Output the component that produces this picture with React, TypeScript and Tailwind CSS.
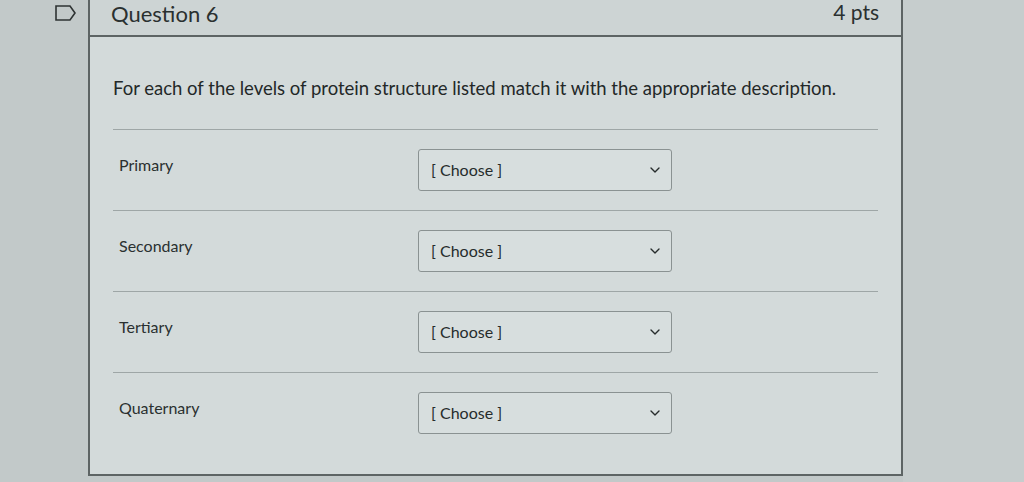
import { ChevronDown } from 'lucide-react';

const rows = ['Primary', 'Secondary', 'Tertiary', 'Quaternary'];

function ChooseSelect() {
  return (
    <div className="w-[254px] h-[42px] rounded-[3px] border border-[#8a9292] bg-[#d7dede] flex items-center justify-between pl-3 pr-2">
      <span className="text-[16px] text-[#262c2c]">[ Choose ]</span>
      <ChevronDown className="w-4 h-4 text-[#262c2c]" strokeWidth={2} />
    </div>
  );
}

export default function App() {
  return (
    <div
      className="w-[1024px] h-[482px] overflow-hidden bg-[#c2c9c9] flex"
      style={{ fontFamily: 'Lato, "Noto Sans", sans-serif' }}
    >
      <div className="w-[88px] shrink-0 flex justify-end pr-[11px] pt-[5px]">
        <svg width="22" height="16" viewBox="0 0 22 16" fill="none">
          <path d="M1 1 H15 L20 8 L15 15 H1 Z" stroke="#2e3333" strokeWidth="1.6" strokeLinejoin="miter" />
        </svg>
      </div>
      <div className="w-[815px] h-[476px] shrink-0 border-l-2 border-r-2 border-b-2 border-[#5d6464] bg-[#d3dada] flex flex-col">
        <div className="h-[37px] shrink-0 bg-[#cdd4d4] border-b-2 border-[#5d6464] flex justify-between pl-[21px] pr-[22px]">
          <span className="text-[22px] text-[#2a3030] leading-none pt-[3px]">Question 6</span>
          <span className="text-[21px] text-[#2a3030] leading-[24px]">4 pts</span>
        </div>
        <div className="pl-[23px] pr-[23px]">
          <p className="text-[18.5px] text-[#232828] mt-[42px] leading-none">
            For each of the levels of protein structure listed match it with the appropriate description.
          </p>
          <div className="mt-[31px] border-t border-[#9ea6a6]">
            {rows.map((label) => (
              <div key={label} className="h-[81px] border-b border-[#9ea6a6] last:border-b-0 flex items-start">
                <span className="w-[305px] pl-[6px] pt-[23px] text-[16px] text-[#2a3030]">{label}</span>
                <div className="pt-[19px]">
                  <ChooseSelect />
                </div>
              </div>
            ))}
          </div>
        </div>
      </div>
      <div className="flex-1 bg-[#c6cdcd]" />
    </div>
  );
}
